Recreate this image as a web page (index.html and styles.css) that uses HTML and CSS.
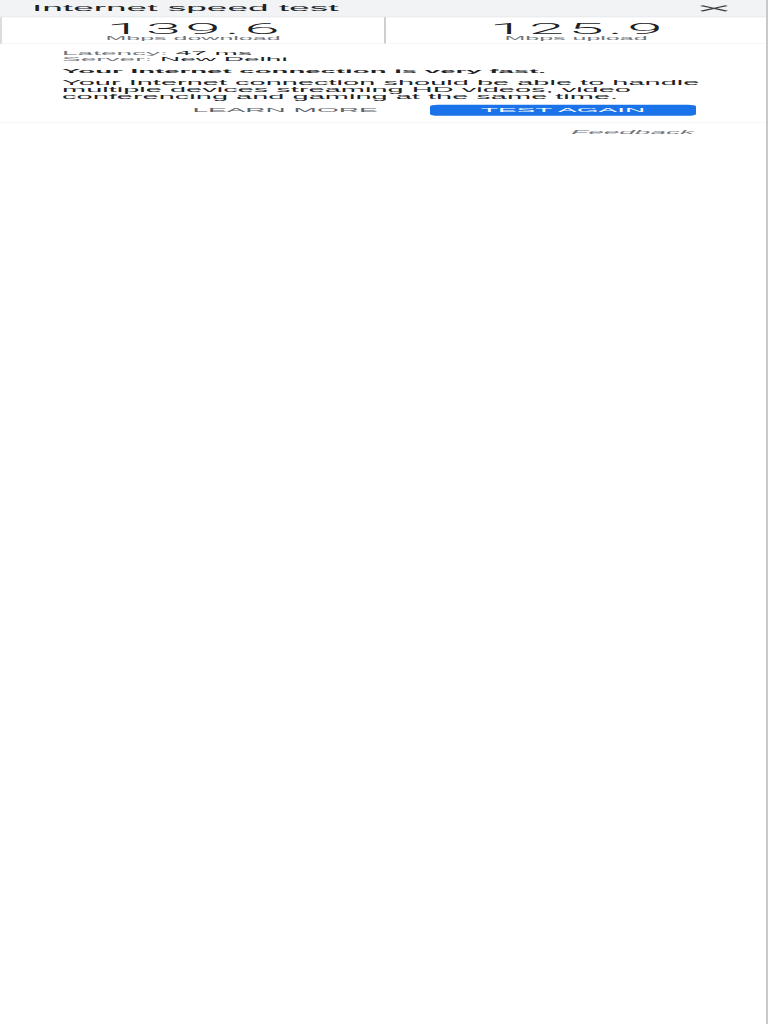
FILE: index.html
```html
<!DOCTYPE html>
<html lang="en">
<head>
<meta charset="utf-8">
<title>Internet speed test</title>
<link rel="stylesheet" href="styles.css">
</head>
<body>
<div class="stage">
  <header class="titlebar">
    <h1 class="title">Internet speed test</h1>
    <button class="close" aria-label="Close">
      <svg viewBox="0 0 24 24" width="24" height="24"><path d="M19 6.41L17.59 5 12 10.59 6.41 5 5 6.41 10.59 12 5 17.59 6.41 19 12 13.41 17.59 19 19 17.59 13.41 12z"/></svg>
    </button>
  </header>
  <section class="stats">
    <div class="stat">
      <div class="stat-value">139.6</div>
      <div class="stat-label">Mbps download</div>
    </div>
    <div class="stat">
      <div class="stat-value">125.9</div>
      <div class="stat-label">Mbps upload</div>
    </div>
  </section>
  <section class="result">
    <div class="meta"><span class="meta-key">Latency:</span> 47 ms</div>
    <div class="meta"><span class="meta-key">Server:</span> New Delhi</div>
    <p class="headline">Your Internet connection is very fast.</p>
    <p class="desc">Your Internet connection should be able to handle multiple devices streaming HD videos, video conferencing and gaming at the same time.</p>
    <div class="actions">
      <button class="btn btn-text">LEARN MORE</button>
      <button class="btn btn-primary">TEST AGAIN</button>
    </div>
  </section>
  <footer class="footer">
    <a class="feedback">Feedback</a>
  </footer>
</div>
</body>
</html>
```
FILE: styles.css
```css
html, body {
  margin: 0;
  padding: 0;
  height: 100%;
  background: #ffffff;
  overflow: hidden;
}

body {
  box-sizing: border-box;
  border-right: 2px solid #c9c9c9;
}

.stage {
  width: 383px;
  transform: scale(2, 0.44);
  transform-origin: 0 0;
  font-family: "Liberation Sans", Arial, sans-serif;
  color: #202124;
  background: #ffffff;
}

.titlebar {
  box-sizing: border-box;
  height: 39px;
  display: flex;
  align-items: center;
  justify-content: space-between;
  padding: 0 14px 0 16px;
  background: #f1f3f4;
  border-bottom: 1px solid #dadce0;
}

.title {
  margin: 0;
  font-size: 18.5px;
  font-weight: 400;
  line-height: 20px;
  color: #202124;
}

.close {
  display: flex;
  padding: 0;
  border: 0;
  background: none;
}

.close svg {
  fill: #3c4043;
}

.stats {
  display: grid;
  grid-template-columns: 1fr 1fr;
  border-left: 1px solid #dadce0;
  border-bottom: 1px solid #e8eaed;
}

.stat {
  box-sizing: border-box;
  height: 60px;
  padding-top: 16px;
  text-align: center;
}

.stat + .stat {
  border-left: 1px solid #cfcfcf;
}

.stat-value {
  font-family: Roboto, "Liberation Sans", Arial, sans-serif;
  font-weight: 300;
  font-size: 32px;
  line-height: 25px;
  letter-spacing: 2px;
  padding-left: 2px;
  color: #202124;
}

.stat-label {
  margin-top: 0;
  font-size: 12.5px;
  line-height: 12px;
  color: #70757a;
}

.result {
  padding: 12.5px 35px 15px 31px;
  border-bottom: 1px solid #ebebeb;
}

.meta {
  font-size: 14px;
  line-height: 14.8px;
  color: #202124;
}

.meta-key {
  color: #70757a;
}

.headline {
  margin: 12.5px 0 0;
  font-size: 13.8px;
  font-weight: 700;
  line-height: 15px;
}

.desc {
  margin: 12.7px -3px 0 0;
  font-size: 14.5px;
  line-height: 15.2px;
}

.actions {
  display: flex;
  justify-content: flex-end;
  gap: 6px;
  margin-top: 10.2px;
}

.btn {
  width: 133px;
  height: 24.5px;
  padding: 0;
  border: 0;
  border-radius: 4px;
  font-family: "Liberation Sans", Arial, sans-serif;
  font-size: 14px;
  line-height: 16px;
}

.btn-text {
  background: none;
  color: #5f6368;
}

.btn-primary {
  background: #1a73e8;
  color: #ffffff;
}

.footer {
  display: flex;
  justify-content: flex-end;
  padding: 14.7px 36px 0 31px;
}

.feedback {
  font-size: 14px;
  line-height: 15px;
  font-style: italic;
  color: #70757a;
}
```
